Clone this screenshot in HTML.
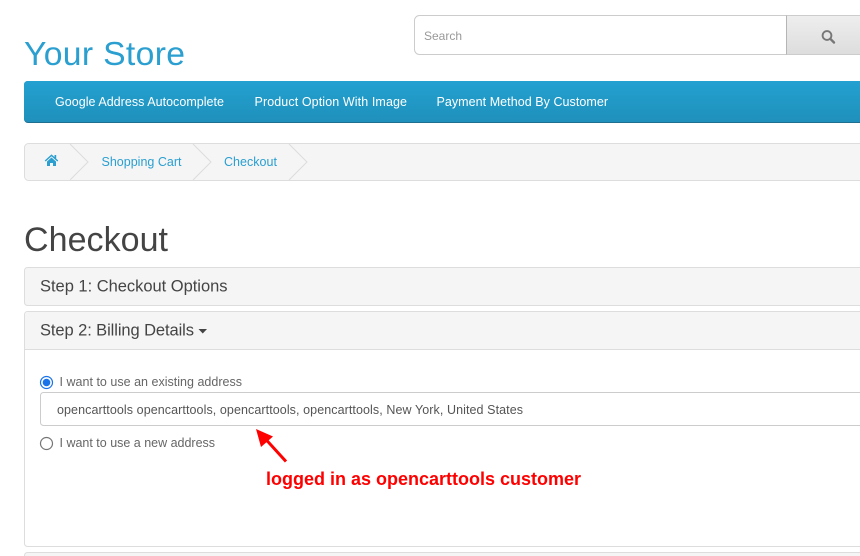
<!DOCTYPE html>
<html><head><meta charset="utf-8"><style>
html,body{margin:0;padding:0;background:#fff;width:860px;height:556px;overflow:hidden}
svg{display:block}
text{font-family:"Liberation Sans",sans-serif}
</style></head><body>
<svg width="860" height="556" viewBox="0 0 860 556" xmlns="http://www.w3.org/2000/svg">
<defs>
<linearGradient id="nav" x1="0" y1="0" x2="0" y2="1"><stop offset="0" stop-color="#23a1d1"/><stop offset="1" stop-color="#1f90bb"/></linearGradient>
<linearGradient id="btn" x1="0" y1="0" x2="0" y2="1"><stop offset="0" stop-color="#eeeeee"/><stop offset="1" stop-color="#dddddd"/></linearGradient>
</defs>
<text x="24" y="65" font-size="33.700" fill="#2a9fd0" textLength="161" lengthAdjust="spacing">Your Store</text>
<!-- search -->
<rect x="414.500" y="15.500" width="460" height="39" rx="5" fill="#fff" stroke="#cccccc"/>
<rect x="786" y="16" width="74" height="38" fill="url(#btn)"/>
<path d="M786 15.500H860M786 54.500H860" stroke="#cccccc"/>
<path d="M786.500 15.500V54.500" stroke="#b5b5b5"/>
<text x="424" y="40" font-size="12" fill="#999" textLength="38" lengthAdjust="spacing">Search</text>
<circle cx="827" cy="35.500" r="4.400" fill="none" stroke="#777" stroke-width="1.900"/>
<path d="M830.300 38.800L834 42.500" stroke="#777" stroke-width="2.400" stroke-linecap="round"/>
<!-- nav -->
<rect x="24" y="81" width="860" height="42" rx="4" fill="#1f6f90"/>
<path d="M28 81H860V122H28Q24 122 24 118V85Q24 81 28 81Z" fill="url(#nav)"/>
<g font-size="12.500" fill="#fff">
<text x="55" y="106" textLength="169" lengthAdjust="spacing">Google Address Autocomplete</text>
<text x="254.500" y="106" textLength="152.500" lengthAdjust="spacing">Product Option With Image</text>
<text x="436.500" y="106" textLength="171.500" lengthAdjust="spacing">Payment Method By Customer</text>
</g>
<!-- breadcrumb -->
<rect x="24.500" y="143.500" width="860" height="37" rx="4" fill="#f5f5f5" stroke="#dddddd"/>
<g fill="none" stroke="#dddddd">
<path d="M70 144L88 162L70 180"/>
<path d="M193 144L211 162L193 180"/>
<path d="M289 144L307 162L289 180"/>
</g>
<path d="M47 161.500L51.500 157.500L56 161.500V166H53V163H50V166H47Z" fill="#2a9fd0"/>
<path d="M45.200 161L51.500 155.300L57.800 161" fill="none" stroke="#2a9fd0" stroke-width="1.400"/>
<rect x="54.500" y="155" width="1.700" height="3.500" fill="#2a9fd0"/>
<g font-size="12.500" fill="#2a9fd0">
<text x="101.500" y="166" textLength="80" lengthAdjust="spacing">Shopping Cart</text>
<text x="224" y="166" textLength="53" lengthAdjust="spacing">Checkout</text>
</g>
<text x="24" y="251" font-size="34" fill="#444" textLength="144" lengthAdjust="spacing">Checkout</text>
<!-- panel 1 -->
<rect x="24.500" y="267.500" width="860" height="38" rx="3" fill="#f5f5f5" stroke="#dddddd"/>
<text x="40" y="291.500" font-size="16.500" fill="#444" textLength="187.500" lengthAdjust="spacing">Step 1: Checkout Options</text>
<!-- panel 2 -->
<rect x="24.500" y="311.500" width="860" height="235" rx="3" fill="#fff" stroke="#dddddd"/>
<path d="M25 349V315Q25 312 28 312H860V349Z" fill="#f5f5f5"/>
<path d="M25 349.500H860" stroke="#dddddd"/>
<text x="40" y="335.500" font-size="16.500" fill="#444" textLength="154" lengthAdjust="spacing">Step 2: Billing Details</text>
<path d="M198.500 329H207L202.750 333.500Z" fill="#444"/>
<!-- radios -->
<circle cx="46.500" cy="382.500" r="6" fill="#fff" stroke="#1a73e8" stroke-width="1.200"/>
<circle cx="46.500" cy="382.500" r="3.800" fill="#1a73e8"/>
<text x="59.500" y="386" font-size="12.500" fill="#666" textLength="182.500" lengthAdjust="spacing">I want to use an existing address</text>
<rect x="40.500" y="392.500" width="860" height="33" rx="3" fill="#fff" stroke="#cccccc"/>
<text x="57" y="414" font-size="12.500" fill="#555" textLength="466" lengthAdjust="spacing">opencarttools opencarttools, opencarttools, opencarttools, New York, United States</text>
<circle cx="46.500" cy="443.500" r="6" fill="#fff" stroke="#767676" stroke-width="1.200"/>
<text x="59.500" y="447" font-size="12.500" fill="#666" textLength="155.500" lengthAdjust="spacing">I want to use a new address</text>
<!-- next panel -->
<rect x="24.500" y="552.500" width="860" height="30" rx="3" fill="#f5f5f5" stroke="#dddddd"/>
<!-- annotation -->
<path d="M286 461.500L265.500 439" stroke="#ff0000" stroke-width="3" fill="none"/>
<path d="M256 429L273 436.500L261 447Z" fill="#ff0000"/>
<text x="266" y="485" font-size="18" font-weight="bold" fill="#ff0000" textLength="315" lengthAdjust="spacing">logged in as opencarttools customer</text>
</svg>
</body></html>
